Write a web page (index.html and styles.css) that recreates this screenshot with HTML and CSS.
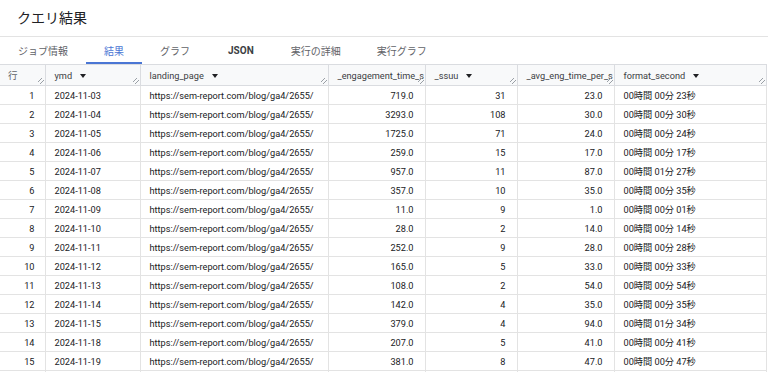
FILE: index.html
```html
<!DOCTYPE html>
<html lang="ja">
<head>
<meta charset="utf-8">
<link rel="stylesheet" href="styles.css">
</head>
<body>
<div class="page">
  <header class="title-bar"><h1 class="title">クエリ結果</h1></header>
  <nav class="tabs">
    <span class="tab">ジョブ情報</span>
    <span class="tab active">結果</span>
    <span class="tab">グラフ</span>
    <span class="tab tab-json">JSON</span>
    <span class="tab">実行の詳細</span>
    <span class="tab">実行グラフ</span>
  </nav>
  <table class="grid">
    <colgroup>
      <col class="c-row"><col class="c-ymd"><col class="c-lp"><col class="c-eng"><col class="c-ss"><col class="c-avg"><col class="c-fmt">
    </colgroup>
    <thead>
      <tr>
        <th class="h-row"><span class="htxt">行</span><span class="grip"></span></th>
        <th><span class="htxt">ymd</span><span class="sort"></span><span class="grip"></span></th>
        <th><span class="htxt">landing_page</span><span class="sort"></span><span class="grip"></span></th>
        <th><span class="htxt clip">_engagement_time_s</span><span class="grip"></span></th>
        <th><span class="htxt">_ssuu</span><span class="sort"></span><span class="grip"></span></th>
        <th><span class="htxt clip">_avg_eng_time_per_s</span><span class="grip"></span></th>
        <th><span class="htxt">format_second</span><span class="sort"></span><span class="grip"></span></th>
      </tr>
    </thead>
    <tbody id="rows">
      <tr><td class="num">1</td><td>2024-11-03</td><td>https://sem-report.com/blog/ga4/2655/</td><td class="num">719.0</td><td class="num">31</td><td class="num">23.0</td><td>00時間 00分 23秒</td></tr>
      <tr><td class="num">2</td><td>2024-11-04</td><td>https://sem-report.com/blog/ga4/2655/</td><td class="num">3293.0</td><td class="num">108</td><td class="num">30.0</td><td>00時間 00分 30秒</td></tr>
      <tr><td class="num">3</td><td>2024-11-05</td><td>https://sem-report.com/blog/ga4/2655/</td><td class="num">1725.0</td><td class="num">71</td><td class="num">24.0</td><td>00時間 00分 24秒</td></tr>
      <tr><td class="num">4</td><td>2024-11-06</td><td>https://sem-report.com/blog/ga4/2655/</td><td class="num">259.0</td><td class="num">15</td><td class="num">17.0</td><td>00時間 00分 17秒</td></tr>
      <tr><td class="num">5</td><td>2024-11-07</td><td>https://sem-report.com/blog/ga4/2655/</td><td class="num">957.0</td><td class="num">11</td><td class="num">87.0</td><td>00時間 01分 27秒</td></tr>
      <tr><td class="num">6</td><td>2024-11-08</td><td>https://sem-report.com/blog/ga4/2655/</td><td class="num">357.0</td><td class="num">10</td><td class="num">35.0</td><td>00時間 00分 35秒</td></tr>
      <tr><td class="num">7</td><td>2024-11-09</td><td>https://sem-report.com/blog/ga4/2655/</td><td class="num">11.0</td><td class="num">9</td><td class="num">1.0</td><td>00時間 00分 01秒</td></tr>
      <tr><td class="num">8</td><td>2024-11-10</td><td>https://sem-report.com/blog/ga4/2655/</td><td class="num">28.0</td><td class="num">2</td><td class="num">14.0</td><td>00時間 00分 14秒</td></tr>
      <tr><td class="num">9</td><td>2024-11-11</td><td>https://sem-report.com/blog/ga4/2655/</td><td class="num">252.0</td><td class="num">9</td><td class="num">28.0</td><td>00時間 00分 28秒</td></tr>
      <tr><td class="num">10</td><td>2024-11-12</td><td>https://sem-report.com/blog/ga4/2655/</td><td class="num">165.0</td><td class="num">5</td><td class="num">33.0</td><td>00時間 00分 33秒</td></tr>
      <tr><td class="num">11</td><td>2024-11-13</td><td>https://sem-report.com/blog/ga4/2655/</td><td class="num">108.0</td><td class="num">2</td><td class="num">54.0</td><td>00時間 00分 54秒</td></tr>
      <tr><td class="num">12</td><td>2024-11-14</td><td>https://sem-report.com/blog/ga4/2655/</td><td class="num">142.0</td><td class="num">4</td><td class="num">35.0</td><td>00時間 00分 35秒</td></tr>
      <tr><td class="num">13</td><td>2024-11-15</td><td>https://sem-report.com/blog/ga4/2655/</td><td class="num">379.0</td><td class="num">4</td><td class="num">94.0</td><td>00時間 01分 34秒</td></tr>
      <tr><td class="num">14</td><td>2024-11-18</td><td>https://sem-report.com/blog/ga4/2655/</td><td class="num">207.0</td><td class="num">5</td><td class="num">41.0</td><td>00時間 00分 41秒</td></tr>
      <tr><td class="num">15</td><td>2024-11-19</td><td>https://sem-report.com/blog/ga4/2655/</td><td class="num">381.0</td><td class="num">8</td><td class="num">47.0</td><td>00時間 00分 47秒</td></tr>
      <tr class="stub"><td></td><td></td><td></td><td></td><td></td><td></td><td></td></tr>
    </tbody>
  </table>
</div>
</body>
</html>
```

FILE: styles.css
```css
* { box-sizing: border-box; }
html, body { margin: 0; padding: 0; background: #fff; }
body {
  font-family: Roboto, "Noto Sans CJK JP", sans-serif;
  color: #202124;
  width: 768px;
  height: 372px;
  overflow: hidden;
}
.page { width: 768px; }
.title-bar {
  height: 37px;
  border-bottom: 1px solid #e3e3e3;
  display: flex;
  align-items: center;
  padding-left: 17px;
}
.title {
  margin: 0;
  font-family: "Noto Sans CJK JP", sans-serif;
  font-weight: 400;
  font-size: 14px;
  color: #202124;
  position: relative;
  top: -1px;
}
.tabs {
  display: flex;
  height: 27px;
}
.tab {
  padding: 0 18px;
  font-family: "Noto Sans CJK JP", sans-serif;
  font-size: 10px;
  color: #5f6368;
  display: flex;
  align-items: center;
  border-bottom: 2px solid transparent;
  padding-top: 1px;
}
.tab-json { font-family: Roboto, sans-serif; font-weight: 700; color: #3c4043; padding: 0 19px 0 20px; padding-top: 1px; }
.tab.active { color: #4a76d4; border-bottom-color: #4a76d4; }
.grid {
  border-collapse: collapse;
  table-layout: fixed;
  width: 766px;
  font-size: 9.2px;
}
.c-row { width: 45px; }
.c-ymd { width: 95px; }
.c-lp { width: 188px; }
.c-eng { width: 97px; }
.c-ss { width: 92px; }
.c-avg { width: 97px; }
.c-fmt { width: 152px; }
th {
  position: relative;
  height: 21px;
  background: #f8f9fa;
  border: 1px solid #dadce0;
  border-left: none;
  font-weight: 400;
  text-align: left;
  color: #3c4043;
  padding: 0 9px;
  white-space: nowrap;
  overflow: hidden;
}
.h-row { padding-left: 8px; }
.htxt { display: inline-block; vertical-align: middle; font-family: Roboto, "Noto Sans CJK JP", sans-serif; }
.h-row .htxt { font-family: "Noto Sans CJK JP", sans-serif; font-size: 9.5px; color: #5f6368; }
.sort {
  display: inline-block;
  vertical-align: middle;
  margin-left: 8px;
  width: 0; height: 0;
  border-left: 3px solid transparent;
  border-right: 3px solid transparent;
  border-top: 4px solid #202124;
}
.grip {
  position: absolute;
  right: 1px;
  bottom: 1px;
  width: 6px;
  height: 6px;
  background:
    linear-gradient(to top left, transparent 30%, #9aa0a6 30%, #9aa0a6 40%, transparent 40%, transparent 62%, #9aa0a6 62%, #9aa0a6 72%, transparent 72%);
}
td {
  height: 19px;
  border-bottom: 1px solid #e3e3e3;
  border-right: 1px solid #e3e3e3;
  padding: 0 9px;
  white-space: nowrap;
  overflow: hidden;
  font-family: Roboto, "Noto Sans CJK JP", sans-serif;
}
td:first-child { padding-left: 10px; }
td.num { text-align: right; padding-right: 11px; }
td:first-child.num { padding-right: 10px; }
```
